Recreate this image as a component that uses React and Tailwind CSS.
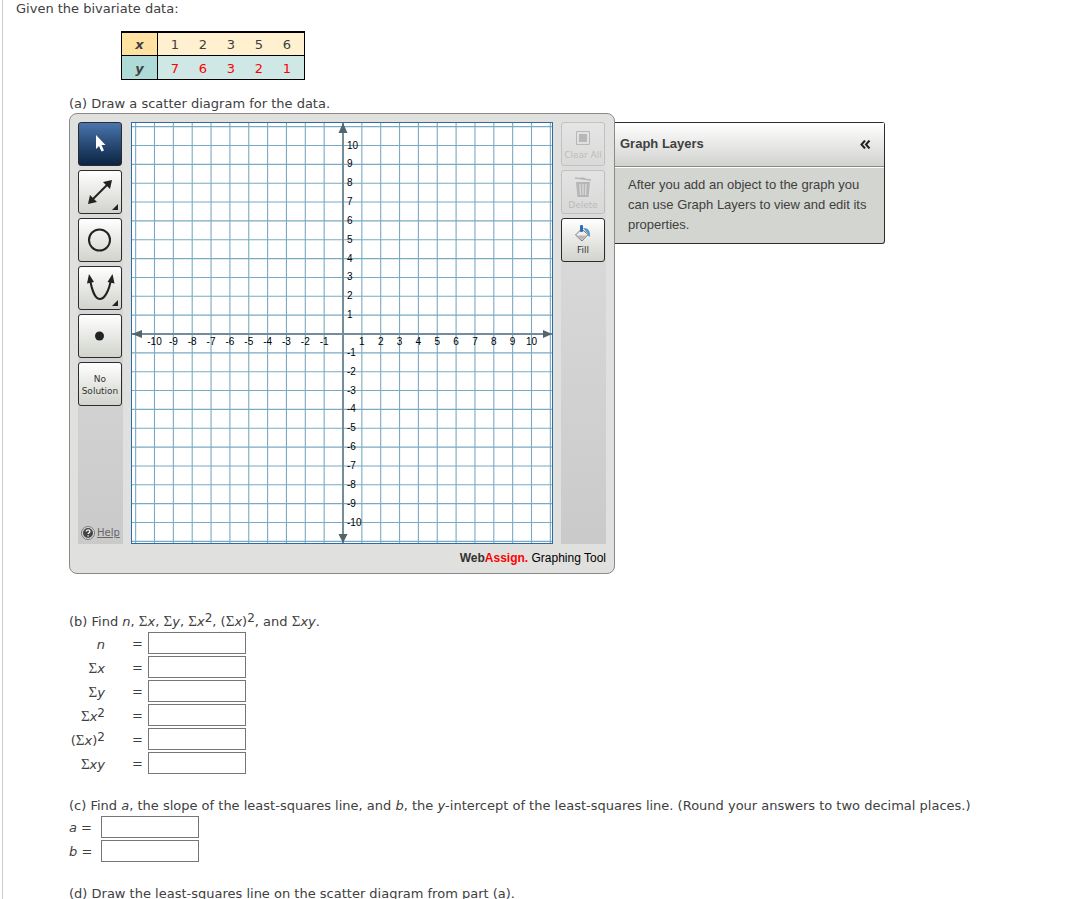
import React, { useState } from "react"

const DATA = [
  { x: 1, y: 7 },
  { x: 2, y: 6 },
  { x: 3, y: 3 },
  { x: 5, y: 2 },
  { x: 6, y: 1 },
]

const ORIGIN = 211
const UNIT = 18.85
const TICKS = Array.from({ length: 23 }, (_, i) => i - 11)
const LABELS = TICKS.filter((n) => n !== 0 && Math.abs(n) !== 11)

function Sigma() {
  return <span className="font-['Liberation_Serif',serif] text-[15px] leading-none">Σ</span>
}

function Sup({ children }) {
  return <sup className="top-[-4px] text-[12px]">{children}</sup>
}

const SUMS = [
  { id: "n", label: <i>n</i> },
  { id: "sum-x", label: <><Sigma /><i>x</i></> },
  { id: "sum-y", label: <><Sigma /><i>y</i></> },
  { id: "sum-x2", label: <><Sigma /><i>x</i><Sup>2</Sup></> },
  { id: "sum-x-2", label: <>(<Sigma /><i>x</i>)<Sup>2</Sup></> },
  { id: "sum-xy", label: <><Sigma /><i>xy</i></> },
]

function DataTable() {
  return (
    <table className="w-[184px] table-fixed border-separate border-spacing-0 border border-t-2 border-black text-center">
      <colgroup>
        <col className="w-[36px]" />
        <col className="w-[31px]" />
        <col className="w-[28px]" />
        <col className="w-[28px]" />
        <col className="w-[28px]" />
        <col className="w-[31px]" />
      </colgroup>
      <tbody>
        <tr className="h-[23px] bg-[#fff0d0]">
          <th scope="row" className="border-r border-b border-black bg-[#ffe1a1] p-0 pt-0.5 italic">x</th>
          {DATA.map((point) => (
            <td key={point.x} className="border-b border-black p-0 pt-0.5 first-of-type:pl-[3px] last-of-type:pr-[3px]">
              {point.x}
            </td>
          ))}
        </tr>
        <tr className="h-[23px] bg-[#cfe8e6] text-[#ff0000]">
          <th scope="row" className="border-r border-black bg-[#aedad8] p-0 pt-0.5 text-[#404040] italic">y</th>
          {DATA.map((point) => (
            <td key={point.x} className="p-0 pt-0.5 first-of-type:pl-[3px] last-of-type:pr-[3px]">
              {point.y}
            </td>
          ))}
        </tr>
      </tbody>
    </table>
  )
}

function Grid() {
  return (
    <svg viewBox="0 0 420 420" className="block size-[420px]" role="img" aria-label="Coordinate grid">
      <rect width="420" height="420" fill="#fff" />
      <g stroke="#78aac2" strokeWidth="1.1">
        {TICKS.map((n) => (
          <React.Fragment key={n}>
            <line x1={ORIGIN + n * UNIT} x2={ORIGIN + n * UNIT} y1="0" y2="420" />
            <line y1={ORIGIN + n * UNIT} y2={ORIGIN + n * UNIT} x1="0" x2="420" />
          </React.Fragment>
        ))}
      </g>
      <path d="M211 0V420M0 211H420" stroke="#748d9a" strokeWidth="2" />
      <path
        d="M211 0l4.500 10h-9zM211 420l4.500-9h-9zM0 211l10-4v8zM420 211l-9-4v8z"
        fill="#53646c"
      />
      <g fill="#000" className="font-['Liberation_Sans',sans-serif] text-[10px]">
        {LABELS.map((n) => (
          <React.Fragment key={n}>
            <text x={ORIGIN + n * UNIT} y="222" textAnchor="middle">{n}</text>
            <text x={215} y={ORIGIN - n * UNIT + 3}>{n}</text>
          </React.Fragment>
        ))}
      </g>
    </svg>
  )
}

function ToolButton({ label, active, disabled, menu, onClick, children }) {
  return (
    <button
      type="button"
      aria-label={label}
      disabled={disabled}
      onClick={onClick}
      className={`relative flex size-[44px] flex-col items-center justify-center rounded-[3px] border bg-linear-to-b text-[9px] leading-3 text-[#333] ${
        active ? "from-[#4a76ae] to-[#0b2444]" : "from-white to-[#d1d3cc]"
      } ${disabled ? "border-[#555] opacity-20" : "border-[#2c2c2c]"}`}
    >
      {children}
      {menu && (
        <svg viewBox="0 0 6 6" className="absolute right-[3px] bottom-[3px] size-[6px]">
          <path d="M6 0v6H0z" fill="#222" />
        </svg>
      )}
    </button>
  )
}

const TOOLS = [
  {
    id: "Pointer",
    icon: (
      <svg viewBox="0 0 42 42" className="size-[42px]">
        <path d="M17 12v14l3-3 2.500 5.500 2.500-1-2.500-5.500h4z" fill="#fff" />
      </svg>
    ),
  },
  {
    id: "Line",
    menu: true,
    icon: (
      <svg viewBox="0 0 42 42" className="size-[42px]">
        <path d="M13 29L29 13" stroke="#222" strokeWidth="2" />
        <path d="M9 33l2-9 7 7zM33 9l-2 9-7-7z" fill="#222" />
      </svg>
    ),
  },
  {
    id: "Circle",
    icon: (
      <svg viewBox="0 0 42 42" className="size-[42px]">
        <circle cx="20.500" cy="21" r="10.500" fill="none" stroke="#222" strokeWidth="2" />
      </svg>
    ),
  },
  {
    id: "Parabola",
    menu: true,
    icon: (
      <svg viewBox="0 0 42 42" className="size-[42px]">
        <path d="M11 12C13 25 17 32 21 32S30 25 32 12" fill="none" stroke="#222" strokeWidth="2" />
        <path d="M10 7l-2 9.500 7-1.500zM33.500 7l2 9.500-7-1.500z" fill="#222" />
      </svg>
    ),
  },
  {
    id: "Point",
    icon: (
      <svg viewBox="0 0 42 42" className="size-[42px]">
        <circle cx="20.500" cy="21" r="4.500" fill="#222" />
      </svg>
    ),
  },
  { id: "No Solution", icon: <span className="pt-0.5">No<br />Solution</span> },
]

function GraphingTool() {
  const [tool, setTool] = useState("Pointer")
  const [open, setOpen] = useState(true)

  return (
    <div className="flex items-start">
      <div className="shrink-0 rounded-lg border border-[#8a8a8a] bg-[#e0e0df] px-2 pt-2">
        <div className="flex gap-2">
          <div className="flex w-[45px] flex-col gap-1 bg-linear-to-b from-[#e0e0df] to-[#cacacb]">
            {TOOLS.map(({ id, icon, menu }) => (
              <ToolButton key={id} label={id} menu={menu} active={tool === id} onClick={() => setTool(id)}>
                {icon}
              </ToolButton>
            ))}
            <a href="#help" className="mt-auto flex items-center gap-0.5 pb-1 pl-[3px] text-[10px] leading-3 text-[#666]">
              <svg viewBox="0 0 14 14" className="size-[14px] shrink-0">
                <circle cx="7" cy="7" r="6.500" fill="#ddd" stroke="#777" />
                <circle cx="7" cy="7" r="5" fill="#444" />
                <path d="M5.200 5.600c0-2.400 3.700-2.300 3.700-.2 0 1.300-1.800 1.300-1.800 2.700M7.100 9.200v1.400" fill="none" stroke="#fff" strokeWidth="1.300" />
              </svg>
              <span className="underline">Help</span>
            </a>
          </div>

          <div className="border border-[#2f6ba3]">
            <Grid />
          </div>

          <div className="flex w-[45px] flex-col gap-1 bg-linear-to-b from-[#dfdfdf] to-[#cacacb]">
            <ToolButton label="Clear All" disabled>
              <svg viewBox="0 0 14 14" className="mt-1 size-[14px]">
                <path d="M.5.5h13v13H.5z" fill="none" stroke="#222" />
                <path d="M3 3h8v8H3z" fill="#222" />
              </svg>
              <span className="mt-1 whitespace-nowrap">Clear All</span>
            </ToolButton>
            <ToolButton label="Delete" disabled>
              <svg viewBox="0 0 18 20" className="mt-1 h-[20px] w-[18px]">
                <path d="M1 1l16 2M7 1l4 .5" stroke="#222" strokeWidth="1.500" />
                <path d="M2 5h14l-1.500 15h-11z" fill="#222" />
                <path d="M6 7l.5 11M9 7v11M12 7l-.5 11" stroke="#ddd" strokeWidth="1.300" />
              </svg>
              <span className="mt-0.5">Delete</span>
            </ToolButton>
            <ToolButton label="Fill" active={tool === "Fill"} onClick={() => setTool("Fill")}>
              <svg viewBox="0 0 18 18" className="size-[18px]">
                <path d="M9 4c5-.5 7.500 3 7 8.500-1.500.3-2.500-1-2.500-3z" fill="#5c98cb" />
                <path d="M7.500 5l6.500 5.500L8 17 1.500 11z" fill="#eee" stroke="#777" />
                <path d="M3 11.500h9.500L8 16z" fill="#b5b5b5" />
                <rect x="6" y="1" width="3" height="7" rx="1" fill="#2e6db5" />
              </svg>
              <span className="mt-0.5">Fill</span>
            </ToolButton>
          </div>
        </div>
        <p className="pt-1.5 pb-1.5 text-right font-['Liberation_Sans',sans-serif] text-[12px] leading-[17px] text-black">
          <b className="text-[#333]">Web</b>
          <b className="text-[#ff0000]">Assign.</b> Graphing Tool
        </p>
      </div>

      <section className="mt-[9px] w-[270px] rounded-r-[3px] border border-l-0 border-[#2c2c2c] bg-[#d3d5d0] font-['Liberation_Sans',sans-serif] text-[#404040]">
        <header className="flex h-[44px] items-center justify-between border-b border-[#888] bg-linear-to-b from-white to-[#d1d3cf] pr-[13px] pl-[5px]">
          <h2 className="pb-0.5 text-[13px] font-bold">Graph Layers</h2>
          <button type="button" aria-label="Collapse Graph Layers" onClick={() => setOpen(!open)}>
            <svg viewBox="0 0 11 9" className="h-[9px] w-[11px]">
              <path d="M5 .5l-3.500 4L5 8.500M9.500.5L6 4.500l3.500 4" fill="none" stroke="#222" strokeWidth="2" />
            </svg>
          </button>
        </header>
        {open && (
          <p className="border-t border-white px-[13px] pt-[7px] pb-2 text-[13px] leading-[20px]">
            After you add an object to the graph you can use Graph Layers to view and edit its properties.
          </p>
        )}
      </section>
    </div>
  )
}

function AnswerInput({ id }) {
  return <input id={id} type="text" className="h-[22px] w-[98px] border border-[#767676] bg-white px-1" />
}

function App() {
  return (
    <main className="min-h-screen bg-white pl-[2px] font-['DejaVu_Sans',sans-serif] text-[13px] leading-[18px] text-[#404040]">
      <div className="min-h-screen border-l border-[#ccc] pl-[13px]">
        <p>Given the bivariate data:</p>
        <div className="mt-[13px] pl-[105px]">
          <DataTable />
        </div>

        <div className="pt-[15px] pl-[53px]">
          <p>(a) Draw a scatter diagram for the data.</p>
          <GraphingTool />

          <section className="mt-[39px]">
            <p>
              (b) Find <i>n</i>, <Sigma /><i>x</i>, <Sigma /><i>y</i>, <Sigma /><i>x</i><Sup>2</Sup>, (<Sigma /><i>x</i>)
              <Sup>2</Sup>, and <Sigma /><i>xy</i>.
            </p>
            <div className="mt-px flex flex-col gap-0.5">
              {SUMS.map(({ id, label }) => (
                <div key={id} className="flex h-[22px] items-center">
                  <label htmlFor={id} className="w-[36px] pt-1 text-right whitespace-nowrap">{label}</label>
                  <span className="w-[43px] pt-0.5 pr-[5px] text-right">=</span>
                  <AnswerInput id={id} />
                </div>
              ))}
            </div>
          </section>

          <section className="mt-[23px]">
            <p className="whitespace-nowrap">
              (c) Find <i>a</i>, the slope of the least-squares line, and <i>b</i>, the <i>y</i>-intercept of the
              least-squares line. (Round your answers to two decimal places.)
            </p>
            <div className="mt-px flex flex-col gap-0.5">
              {["a", "b"].map((name) => (
                <div key={name} className="flex h-[22px] items-center">
                  <label htmlFor={name} className="w-[32px] pt-0.5"><i>{name}</i> =</label>
                  <AnswerInput id={name} />
                </div>
              ))}
            </div>
          </section>

          <p className="mt-[23px]">(d) Draw the least-squares line on the scatter diagram from part (a).</p>
        </div>
      </div>
    </main>
  )
}

export default App
